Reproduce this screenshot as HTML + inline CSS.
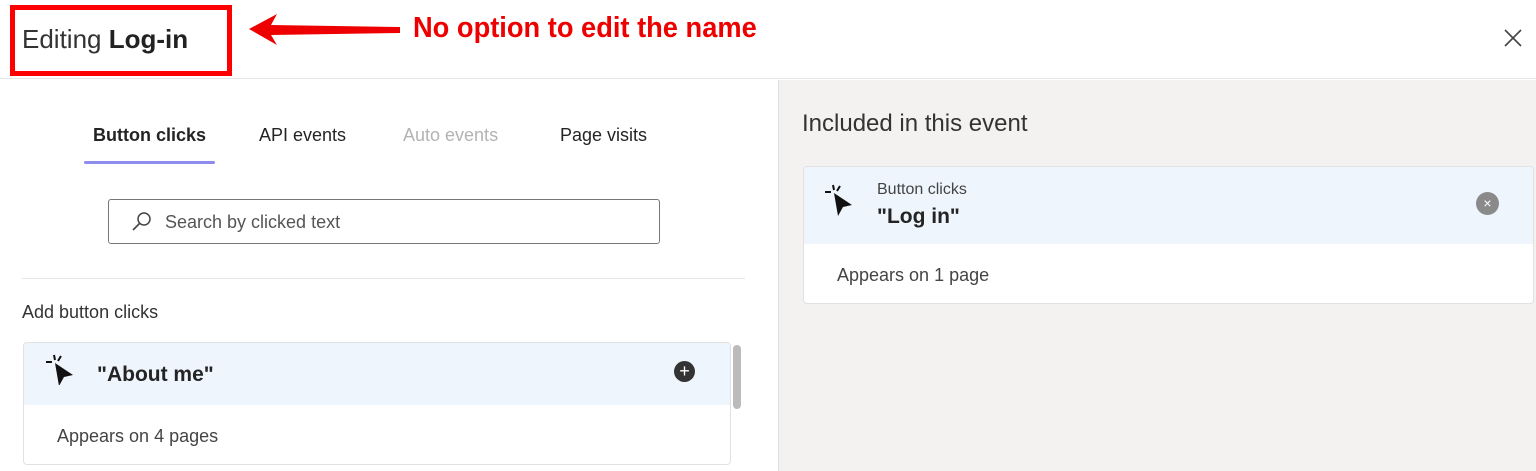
<!DOCTYPE html>
<html><head><style>
*{margin:0;padding:0;box-sizing:border-box}
body{width:1536px;height:471px;overflow:hidden;font-family:"Liberation Sans",sans-serif;color:#242424;background:#fff;position:relative}
.a{position:absolute}
</style></head><body>
<div class="a" style="left:0;top:0;width:1536px;height:79px;background:#fff;border-bottom:1px solid #e6e6e6"></div>
<div class="a" style="left:10px;top:5px;width:222px;height:71px;border:5px solid #f00"></div>
<div class="a" style="left:22px;top:24px;font-size:26px;color:#333;white-space:nowrap">Editing <b style="font-weight:600;color:#222">Log-in</b></div>
<svg class="a" style="left:245px;top:12px" width="160" height="36"><polygon points="4,17 32,2 26,13 155,15 155,21 26,23 32,33" fill="#e00"/></svg>
<div class="a" style="left:413px;top:12px;font-size:29px;font-weight:bold;color:#e00;white-space:nowrap;transform:scaleX(0.94);transform-origin:left;text-shadow:1px 1px 1px #fff,-1px -1px 1px #fff">No option to edit the name</div>
<svg class="a" style="left:1503px;top:28px" width="20" height="20"><path d="M2 2L18 18M18 2L2 18" stroke="#444" stroke-width="1.6"/></svg>

<div class="a" style="left:778px;top:80px;width:758px;height:391px;background:#f3f2f1;border-left:1px solid #e1dfdd"></div>

<div class="a" style="left:93px;top:125px;font-size:18px;font-weight:600">Button clicks</div>
<div class="a" style="left:84px;top:161px;width:131px;height:3px;background:#8f8cf0;border-radius:2px"></div>
<div class="a" style="left:259px;top:125px;font-size:18px">API events</div>
<div class="a" style="left:403px;top:125px;font-size:18px;color:#b3b3b3">Auto events</div>
<div class="a" style="left:560px;top:125px;font-size:18px">Page visits</div>

<div class="a" style="left:108px;top:199px;width:552px;height:45px;border:1px solid #777;border-radius:3px"></div>
<svg class="a" style="left:130px;top:211px" width="24" height="22"><circle cx="14" cy="8" r="6" fill="none" stroke="#444" stroke-width="1.5"/><path d="M10 12L3 19" stroke="#444" stroke-width="1.6"/></svg>
<div class="a" style="left:165px;top:212px;font-size:18px;color:#555">Search by clicked text</div>
<div class="a" style="left:22px;top:278px;width:723px;height:1px;background:#e6e6e6"></div>
<div class="a" style="left:22px;top:302px;font-size:18px;color:#333">Add button clicks</div>

<div class="a" style="left:23px;top:342px;width:708px;height:123px;border:1px solid #e1e1e1;border-radius:4px;background:#fff;overflow:hidden"><div style="height:62px;background:#eef5fc"></div></div>
<svg class="a" style="left:44px;top:353px" width="32" height="32"><path d="M2 9h6M10 2l1 5M17 3l-3 5" stroke="#111" stroke-width="2"/><polygon points="11,10 29,22 20,24 15,33" fill="#111"/></svg>
<div class="a" style="left:97px;top:363px;font-size:21px;font-weight:600">"About me"</div>
<div class="a" style="left:674px;top:361px;width:21px;height:21px;border-radius:50%;background:#333;color:#fff;font-size:18px;line-height:20px;text-align:center">+</div>
<div class="a" style="left:57px;top:426px;font-size:18px;color:#444">Appears on 4 pages</div>
<div class="a" style="left:733px;top:345px;width:8px;height:64px;background:#bbb;border-radius:4px"></div>

<div class="a" style="left:802px;top:110px;font-size:24px;color:#333">Included in this event</div>
<div class="a" style="left:803px;top:166px;width:731px;height:138px;border:1px solid #e1e1e1;border-radius:4px;background:#fff;overflow:hidden"><div style="height:77px;background:#eef5fc"></div></div>
<svg class="a" style="left:823px;top:183px" width="32" height="34"><path d="M2 9h6M10 2l1 5M17 3l-3 5" stroke="#111" stroke-width="2"/><polygon points="11,10 29,22 20,24 15,33" fill="#111"/></svg>
<div class="a" style="left:877px;top:181px;font-size:16px;color:#444">Button clicks</div>
<div class="a" style="left:877px;top:205px;font-size:21px;font-weight:600">"Log in"</div>
<div class="a" style="left:1476px;top:192px;width:23px;height:23px;border-radius:50%;background:#8a8a8a;color:#fff;font-size:14px;line-height:22px;text-align:center">×</div>
<div class="a" style="left:837px;top:265px;font-size:18px;color:#444">Appears on 1 page</div>
</body></html>
